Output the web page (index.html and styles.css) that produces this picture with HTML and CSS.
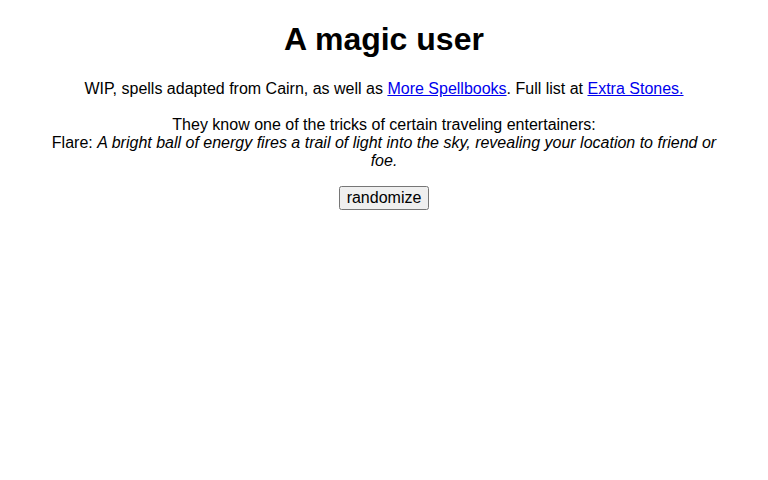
FILE: index.html
```html
<!DOCTYPE html>
<html lang="en">
<head>
<meta charset="utf-8">
<title>A magic user</title>
<link rel="stylesheet" href="styles.css">
</head>
<body class="page">
  <main class="sheet">
    <h1 class="title">A magic user</h1>
    <p class="text">WIP, spells adapted from Cairn, as well as <a href="#">More Spellbooks</a>. Full list at <a href="#">Extra Stones.</a><br><br>They know one of the tricks of certain traveling entertainers:<br>Flare: <i>A bright ball of energy fires a trail of light into the sky, revealing your location to friend or foe.</i></p>
    <button class="roll" type="button">randomize</button>
  </main>
</body>
</html>
```
FILE: styles.css
```css
.page {
  margin: 0;
  font-family: "Liberation Sans", Arial, sans-serif;
  font-size: 16px;
  color: #000;
  background: #fff;
}

.sheet {
  max-width: 680px;
  margin: 0 auto;
  padding-top: 1px;
  text-align: center;
}

.title {
  font-size: 32px;
  font-weight: bold;
  margin: 20.44px 0 21.44px;
}

.text {
  margin: 21.44px 0 16px;
}

.roll {
  font-family: inherit;
  font-size: 16px;
}
```
